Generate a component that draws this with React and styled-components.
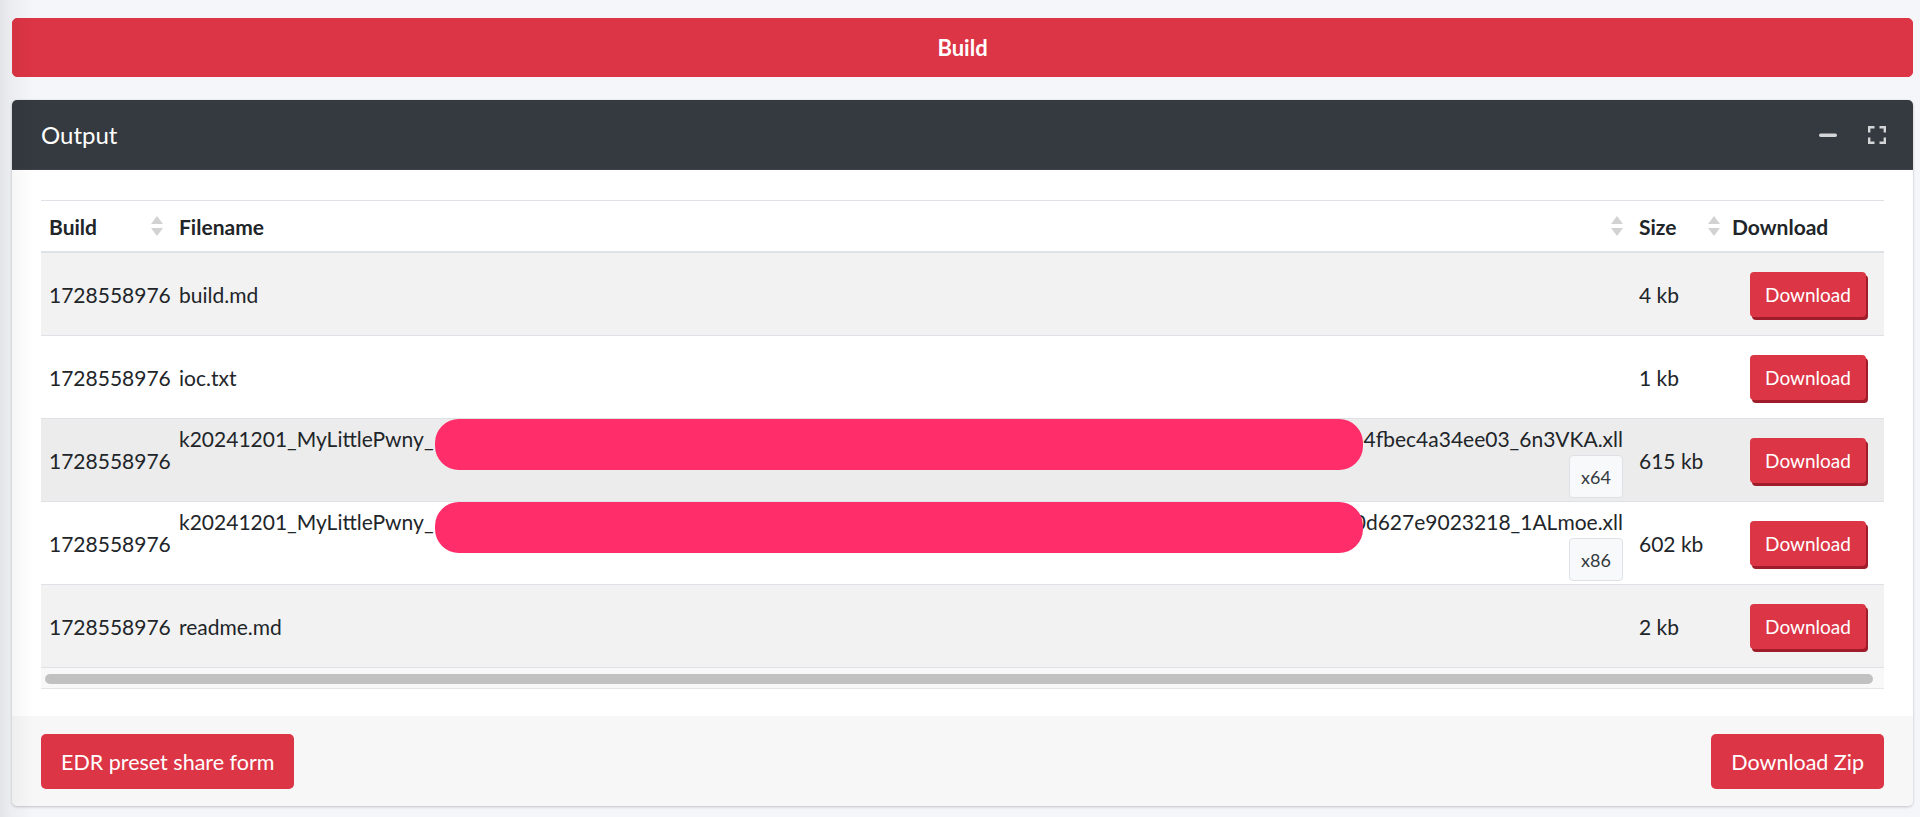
import React from "react";
import styled, { createGlobalStyle } from "styled-components";

const GlobalStyle = createGlobalStyle`
  html, body {
    margin: 0;
    padding: 0;
  }
  body {
    background: #f4f6f9;
    font-family: Lato, "Noto Sans", "Liberation Sans", sans-serif;
    color: #212529;
  }
  * {
    box-sizing: border-box;
  }
`;

const COLUMNS = "130px 1460px 93px 160px";

const files = [
  { build: "1728558976", name: "build.md", size: "4 kb" },
  { build: "1728558976", name: "ioc.txt", size: "1 kb" },
  {
    build: "1728558976",
    prefix: "k20241201_MyLittlePwny_",
    suffix: "4fbec4a34ee03_6n3VKA.xll",
    arch: "x64",
    size: "615 kb",
    hover: true,
  },
  {
    build: "1728558976",
    prefix: "k20241201_MyLittlePwny_",
    suffix: "0d627e9023218_1ALmoe.xll",
    arch: "x86",
    size: "602 kb",
  },
  { build: "1728558976", name: "readme.md", size: "2 kb" },
];

const SideShadow = styled.div`
  position: fixed;
  top: 0;
  left: 0;
  bottom: 0;
  width: 34px;
  pointer-events: none;
  background: linear-gradient(
    to right,
    rgba(0, 0, 0, 0.07) 0,
    rgba(0, 0, 0, 0.035) 11px,
    rgba(0, 0, 0, 0) 34px
  );
`;

const Page = styled.div`
  padding: 18px 7px 10px 12px;
  display: flex;
  flex-direction: column;
  gap: 23px;
`;

const BuildButton = styled.button`
  height: 59px;
  width: 100%;
  border: 1px solid #dc3545;
  border-radius: 5px;
  background: #dc3545;
  color: #fff;
  font-family: inherit;
  font-size: 22px;
  font-weight: 700;
  cursor: pointer;
`;

const Card = styled.section`
  background: #fff;
  border-radius: 5px;
  box-shadow: 0 0 1px rgba(0, 0, 0, 0.125), 0 1px 3px rgba(0, 0, 0, 0.2);
  overflow: hidden;
`;

const CardHeader = styled.header`
  height: 70px;
  background: #343a40;
  border-bottom: 1px solid #3d434a;
  padding: 0 27px 0 29px;
  display: flex;
  align-items: center;
  justify-content: space-between;
`;

const CardTitle = styled.h3`
  margin: 0;
  color: #fff;
  font-size: 24px;
  font-weight: 400;
`;

const Tools = styled.div`
  display: flex;
  align-items: center;
  gap: 31px;
`;

const ToolButton = styled.button`
  background: none;
  border: 0;
  padding: 0;
  width: 18px;
  height: 18px;
  display: flex;
  align-items: center;
  justify-content: center;
  color: #d3d5d7;
  cursor: pointer;
`;

const CardBody = styled.div`
  padding: 30px 29px 27px;
`;

const HeadRow = styled.div`
  display: grid;
  grid-template-columns: ${COLUMNS};
  height: 53px;
  border-top: 1px solid #dee2e6;
  border-bottom: 2px solid #dee2e6;
`;

const HeadCell = styled.div`
  display: flex;
  align-items: center;
  justify-content: space-between;
  padding: 0 ${({ $padRight }) => $padRight || 8}px 0 8px;
  font-size: 21px;
  font-weight: 700;
`;

const Row = styled.div`
  display: grid;
  grid-template-columns: ${COLUMNS};
  height: 83px;
  border-bottom: 1px solid #dee2e6;
  background: ${({ $bg }) => $bg};
`;

const Cell = styled.div`
  position: relative;
  display: flex;
  flex-direction: column;
  justify-content: center;
  align-items: ${({ $align }) => $align || "stretch"};
  padding: 0 ${({ $padRight }) => $padRight || 8}px 0 8px;
  font-size: 21px;
  white-space: nowrap;
`;

const FileLine = styled.div`
  display: flex;
  justify-content: space-between;
  line-height: 33px;
`;

const BadgeLine = styled.div`
  display: flex;
  justify-content: flex-end;
`;

const Badge = styled.span`
  width: 54px;
  height: 43px;
  display: flex;
  align-items: center;
  justify-content: center;
  background: #f8f9fa;
  border: 1px solid #dee2e6;
  border-radius: 4px;
  font-size: 18px;
  color: #343a40;
`;

const Redaction = styled.div`
  position: absolute;
  top: 0;
  left: 264px;
  width: 928px;
  height: 51px;
  border-radius: 24px;
  background: #ff2d6a;
`;

const RowButton = styled.button`
  width: 116px;
  height: 45px;
  border: 0;
  border-radius: 4px;
  background: #dc3545;
  box-shadow: 2px 3px 0 #9f1d2a;
  color: #fff;
  font-family: inherit;
  font-size: 19px;
  cursor: pointer;
`;

const ScrollTrack = styled.div`
  height: 21px;
  background: #f8f8f8;
  border-bottom: 1px solid #e6e6e6;
  padding: 6px 11px 0 4px;
`;

const ScrollThumb = styled.div`
  height: 10px;
  border-radius: 5px;
  background: #c1c1c1;
`;

const CardFooter = styled.footer`
  background: #f7f7f7;
  padding: 18px 29px 17px;
  display: flex;
  justify-content: space-between;
`;

const FooterButton = styled.button`
  height: 55px;
  padding: 0 20px;
  border: 0;
  border-radius: 5px;
  background: #dc3545;
  color: #fff;
  font-family: inherit;
  font-size: 21.5px;
  cursor: pointer;
`;

const SortIcon = () => (
  <svg width="12" height="22" viewBox="0 0 12 22" aria-hidden="true">
    <polygon points="0,9 6,1 12,9" fill="#d2d2d2" />
    <polygon points="0,13 12,13 6,21" fill="#d2d2d2" />
  </svg>
);

const MinusIcon = () => (
  <svg width="18" height="18" viewBox="0 0 18 18" aria-hidden="true">
    <rect x="0" y="7.5" width="18" height="3.5" rx="1.7" fill="currentColor" />
  </svg>
);

const ExpandIcon = () => (
  <svg width="18" height="18" viewBox="0 0 18 18" aria-hidden="true">
    <path
      d="M1.2 6.5V1.2h5.3M11.5 1.2h5.3v5.3M16.8 11.5v5.3h-5.3M6.5 16.8H1.2v-5.3"
      fill="none"
      stroke="currentColor"
      strokeWidth="2.4"
    />
  </svg>
);

const rowBg = (i, f) => {
  if (f.hover) return "#ececec";
  return i % 2 === 0 ? "#f2f2f2" : "#ffffff";
};

export default function App() {
  return (
    <>
      <GlobalStyle />
      <SideShadow />
      <Page>
        <BuildButton>Build</BuildButton>
        <Card>
          <CardHeader>
            <CardTitle>Output</CardTitle>
            <Tools>
              <ToolButton aria-label="Collapse">
                <MinusIcon />
              </ToolButton>
              <ToolButton aria-label="Maximize">
                <ExpandIcon />
              </ToolButton>
            </Tools>
          </CardHeader>
          <CardBody>
            <HeadRow>
              <HeadCell>
                Build
                <SortIcon />
              </HeadCell>
              <HeadCell>
                Filename
                <SortIcon />
              </HeadCell>
              <HeadCell $padRight={4}>
                Size
                <SortIcon />
              </HeadCell>
              <HeadCell>Download</HeadCell>
            </HeadRow>
            {files.map((f, i) => (
              <Row key={i} $bg={rowBg(i, f)}>
                <Cell>{f.build}</Cell>
                <Cell>
                  {f.arch ? (
                    <>
                      <FileLine>
                        <span>{f.prefix}</span>
                        <span>{f.suffix}</span>
                      </FileLine>
                      <BadgeLine>
                        <Badge>{f.arch}</Badge>
                      </BadgeLine>
                      <Redaction />
                    </>
                  ) : (
                    f.name
                  )}
                </Cell>
                <Cell>{f.size}</Cell>
                <Cell $align="flex-end" $padRight={18}>
                  <RowButton>Download</RowButton>
                </Cell>
              </Row>
            ))}
            <ScrollTrack>
              <ScrollThumb />
            </ScrollTrack>
          </CardBody>
          <CardFooter>
            <FooterButton>EDR preset share form</FooterButton>
            <FooterButton>Download Zip</FooterButton>
          </CardFooter>
        </Card>
      </Page>
    </>
  );
}
